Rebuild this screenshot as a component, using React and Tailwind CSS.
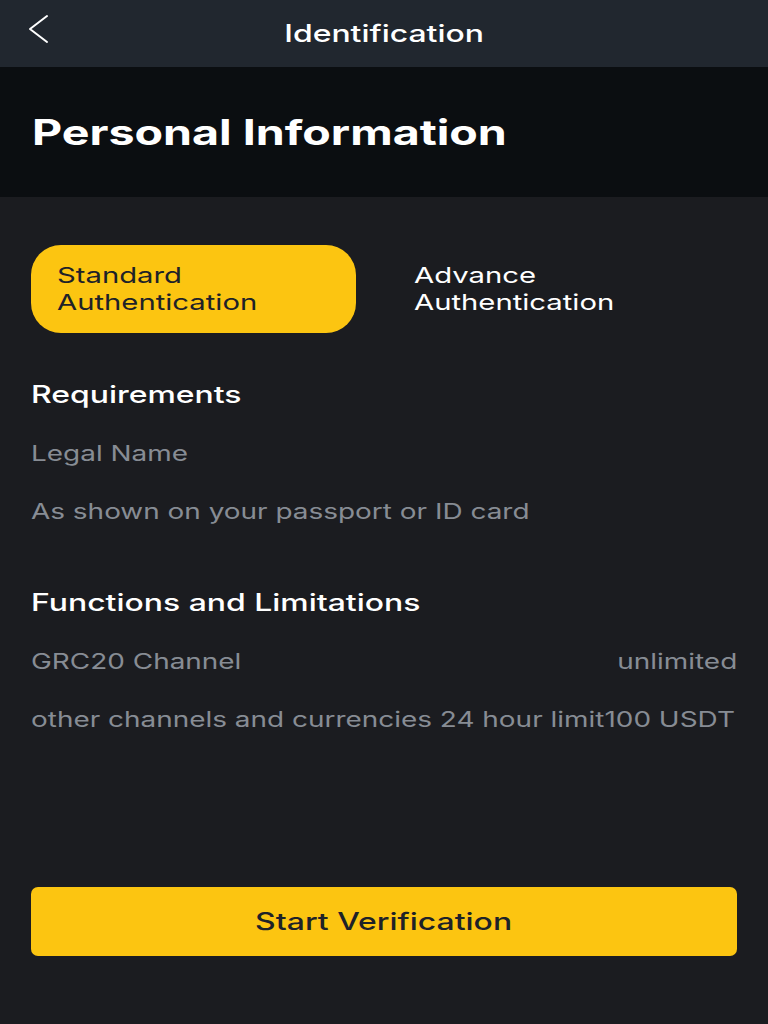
const font = { fontFamily: 'Inter, "Noto Sans", sans-serif' }

// the app's type is set wide; stretch each text run horizontally
function Wide({ children, className = '', origin = 'origin-left' }) {
  return <span className={`inline-block whitespace-nowrap scale-x-[1.33] ${origin} ${className}`}>{children}</span>
}

function Row({ left, right }) {
  return (
    <div className="flex justify-between h-[58px] items-center text-[21px] text-[#878c94]">
      <Wide>{left}</Wide>
      {right && <Wide origin="origin-right">{right}</Wide>}
    </div>
  )
}

function Heading({ children, className = '' }) {
  return (
    <h3 className={`h-[30px] flex items-center text-white text-[24px] font-medium ${className}`}>
      <Wide>{children}</Wide>
    </h3>
  )
}

export default function App() {
  return (
    <div className="w-[768px] h-[1024px] bg-[#1b1c20] flex flex-col" style={font}>
      <header className="h-[67px] bg-[#21272f] relative flex items-center justify-center">
        <button className="absolute left-[28px] top-[14px] text-white">
          <svg width="22" height="30" viewBox="0 0 22 30" fill="none" stroke="currentColor" strokeWidth="2" strokeLinecap="round" strokeLinejoin="round">
            <polyline points="19,2 2,15 19,28" />
          </svg>
        </button>
        <h1 className="text-white text-[24px] font-medium">
          <Wide origin="origin-center">Identification</Wide>
        </h1>
      </header>

      <div className="h-[130px] bg-[#0b0e11] flex items-center px-[32px]">
        <h2 className="text-white text-[35px] font-bold">
          <Wide>Personal Information</Wide>
        </h2>
      </div>

      <main className="flex-1 flex flex-col px-[31px]">
        <div className="flex items-center mt-[48px] h-[88px]">
          <div className="w-[325px] h-[88px] rounded-[30px] bg-[#fcc511] flex flex-col justify-center pl-[26px] text-[22px] leading-[27px] text-[#1e2228]">
            <Wide>Standard</Wide>
            <Wide>Authentication</Wide>
          </div>
          <div className="flex flex-col pl-[58px] text-[22px] leading-[27px] text-white">
            <Wide>Advance</Wide>
            <Wide>Authentication</Wide>
          </div>
        </div>

        <Heading className="mt-[47px]">Requirements</Heading>
        <div className="mt-[15px]">
          <Row left="Legal Name" />
          <Row left="As shown on your passport or ID card" />
        </div>

        <Heading className="mt-[47px]">Functions and Limitations</Heading>
        <div className="mt-[15px]">
          <Row left="GRC20 Channel" right="unlimited" />
          <Row left="other channels and currencies 24 hour limit100 USDT" />
        </div>

        <button className="mt-auto mb-[68px] h-[69px] w-full rounded-[7px] bg-[#fcc511] text-[#1e2228] text-[24px] font-medium">
          <Wide origin="origin-center">Start Verification</Wide>
        </button>
      </main>
    </div>
  )
}
